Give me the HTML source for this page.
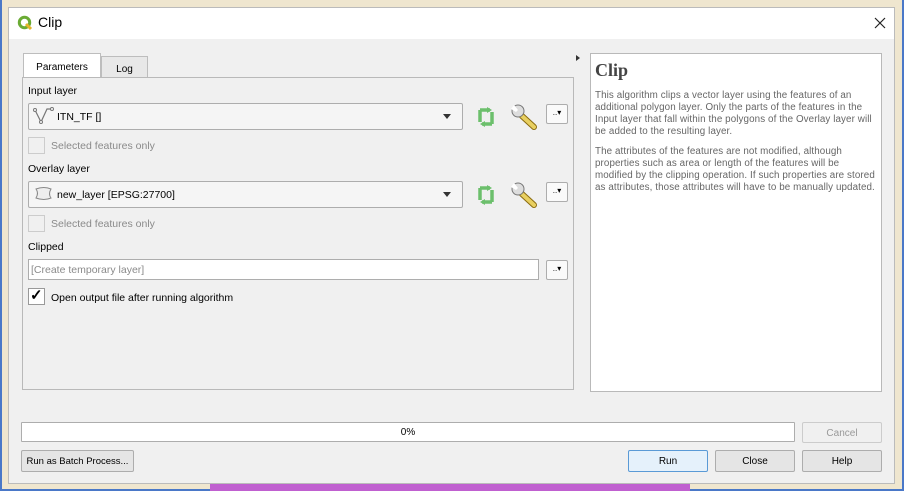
<!DOCTYPE html>
<html><head><style>
*{box-sizing:border-box;margin:0;padding:0}
body{width:904px;height:491px;overflow:hidden;background:#efe6cf;font-family:"Liberation Sans",sans-serif;font-size:10.5px;color:#000;position:relative}
.frame{position:absolute;left:0;top:0;width:904px;height:491px;border:2px solid #4a78c8;border-top:none}
.purple{position:absolute;left:210px;top:484px;width:480px;height:7px;background:#c060d0}
.dlg{position:absolute;left:8px;top:7px;width:887px;height:477px;background:#f0f0f0;border:1px solid #bbb}
.title{position:absolute;left:0;top:0;width:885px;height:31px;background:#fff}
.abs{position:absolute;white-space:nowrap}
.box{position:absolute;background:#fff;border:1px solid #adadad;border-radius:2px}
.btn{position:absolute;background:#e5e5e5;border:1px solid #adadad;border-radius:2px;text-align:center;font-size:10px;white-space:nowrap}
.gray{color:#8a8a8a}
.help{position:absolute;left:581px;top:45px;width:292px;height:339px;background:#fff;border:1px solid #b9b9b9;padding:5px 4px;color:#666;font-size:9.8px;letter-spacing:0.1px;line-height:12px}
.help h1{font-family:"Liberation Serif",serif;font-size:18px;line-height:22px;font-weight:bold;color:#444;margin-bottom:9px;letter-spacing:0}
.help p{margin-bottom:8px}
.cb{position:absolute;width:17px;height:17px;border:1px solid #ccc;background:#f0f0f0}
</style></head><body>
<div class="frame"></div>
<div class="purple"></div>
<div class="dlg">
 <div class="title">
  <svg class="abs" style="left:8px;top:7px" width="16" height="16" viewBox="0 0 16 16"><circle cx="7.5" cy="7.5" r="5.2" fill="none" stroke="#6aab34" stroke-width="3"/><path d="M9 9l5 5" stroke="#e4b52a" stroke-width="3"/></svg>
  <div class="abs" style="left:29px;top:6px;font-size:14px">Clip</div>
  <svg class="abs" style="left:865px;top:9px" width="12" height="12"><path d="M1 1l10 10M11 1L1 11" stroke="#222" stroke-width="1.2"/></svg>
 </div>
 <div class="abs" style="left:14px;top:45px;width:78px;height:24px;background:#fff;border:1px solid #bdbdbd;border-bottom:none;text-align:center;padding-top:8px;font-size:10px">Parameters</div>
 <div class="abs" style="left:92px;top:48px;width:47px;height:21px;background:#e8e8e8;border:1px solid #bdbdbd;border-bottom:none;text-align:center;padding-top:7px;font-size:10px">Log</div>
 <div class="abs" style="left:13px;top:69px;width:552px;height:313px;border:1px solid #b9b9b9;background:#f0f0f0"></div>
 <div class="abs" style="left:19px;top:77px">Input layer</div>
 <div class="box" style="left:19px;top:95px;width:435px;height:27px;background:#f5f5f5"></div>
 <svg class="abs" style="left:24px;top:99px" width="22" height="18"><path d="M2 3l6 12 6-13h5" fill="none" stroke="#777" stroke-width="1.2"/><circle cx="2" cy="3" r="1.5" fill="#fff" stroke="#777"/><circle cx="8" cy="15" r="1.5" fill="#fff" stroke="#777"/><circle cx="19" cy="2" r="1.5" fill="#fff" stroke="#777"/></svg>
 <div class="abs" style="left:48px;top:103px">ITN_TF []</div>
 <div class="abs" style="left:434px;top:106px;border:4px solid transparent;border-top:5px solid #333;"></div>
 <div class="cb" style="left:19px;top:129px"></div>
 <div class="abs gray" style="left:42px;top:132px">Selected features only</div>
 <div class="abs" style="left:19px;top:155px">Overlay layer</div>
 <div class="box" style="left:19px;top:173px;width:435px;height:27px;background:#f5f5f5"></div>
 <svg class="abs" style="left:24px;top:177px" width="22" height="18"><path d="M3 4q8-3 15 0q-3 5 0 9q-7 3-15 0q3-5 0-9z" fill="#eee" stroke="#888"/></svg>
 <div class="abs" style="left:48px;top:181px">new_layer [EPSG:27700]</div>
 <div class="abs" style="left:434px;top:184px;border:4px solid transparent;border-top:5px solid #333;"></div>
 <div class="cb" style="left:19px;top:207px"></div>
 <div class="abs gray" style="left:42px;top:210px">Selected features only</div>
 <div class="abs" style="left:19px;top:233px">Clipped</div>
 <div class="box" style="left:19px;top:251px;width:511px;height:21px;border-radius:0"></div>
 <div class="abs gray" style="left:22px;top:256px">[Create temporary layer]</div>
 <div class="cb" style="left:19px;top:280px;background:#fff;border-color:#999"></div>
 <div class="abs" style="left:21px;top:278px;font-size:15px;font-weight:bold">✓</div>
 <div class="abs" style="left:42px;top:284px">Open output file after running algorithm</div>
 <svg class="abs" style="left:464px;top:98px" width="26" height="22" viewBox="0 0 26 22"><path d="M7 4h10M19 18H9M7 4v12M19 18V6" fill="none" stroke="#6cbf6c" stroke-width="3.5"/><path d="M14 1l5 3-5 3zM12 15l-5 3 5 3z" fill="#6cbf6c"/></svg>
 <svg class="abs" style="left:501px;top:95px" width="28" height="28" viewBox="0 0 28 28"><path d="M12 13l12 11" stroke="#8a6b10" stroke-width="6" stroke-linecap="round"/><path d="M12 13l12 11" stroke="#e8cf60" stroke-width="4" stroke-linecap="round"/><circle cx="8" cy="8" r="6" fill="#ddd" stroke="#777"/><path d="M4 2l4 5-2 2-5-3" fill="#fff"/></svg>
 <div class="btn" style="left:537px;top:96px;width:22px;height:20px;background:#fafafa;font-size:8px;padding-top:3px">..▾</div>
 <svg class="abs" style="left:464px;top:176px" width="26" height="22" viewBox="0 0 26 22"><path d="M7 4h10M19 18H9M7 4v12M19 18V6" fill="none" stroke="#6cbf6c" stroke-width="3.5"/><path d="M14 1l5 3-5 3zM12 15l-5 3 5 3z" fill="#6cbf6c"/></svg>
 <svg class="abs" style="left:501px;top:173px" width="28" height="28" viewBox="0 0 28 28"><path d="M12 13l12 11" stroke="#8a6b10" stroke-width="6" stroke-linecap="round"/><path d="M12 13l12 11" stroke="#e8cf60" stroke-width="4" stroke-linecap="round"/><circle cx="8" cy="8" r="6" fill="#ddd" stroke="#777"/><path d="M4 2l4 5-2 2-5-3" fill="#fff"/></svg>
 <div class="btn" style="left:537px;top:174px;width:22px;height:20px;background:#fafafa;font-size:8px;padding-top:3px">..▾</div>
 <div class="btn" style="left:537px;top:252px;width:22px;height:20px;background:#fafafa;font-size:8px;padding-top:3px">..▾</div>
 <div class="abs" style="left:567px;top:47px;border:3px solid transparent;border-left:4px solid #333"></div>
 <div class="help">
  <h1>Clip</h1>
  <p>This algorithm clips a vector layer using the features of an additional polygon layer. Only the parts of the features in the Input layer that fall within the polygons of the Overlay layer will be added to the resulting layer.</p>
  <p>The attributes of the features are not modified, although properties such as area or length of the features will be modified by the clipping operation. If such properties are stored as attributes, those attributes will have to be manually updated.</p>
 </div>
 <div class="box" style="left:12px;top:414px;width:774px;height:20px;border-radius:1px;text-align:center;padding-top:4px;font-size:10px">0%</div>
 <div class="btn" style="left:793px;top:414px;width:80px;height:21px;color:#999;padding-top:5px;background:#f0f0f0;border-color:#ccc">Cancel</div>
 <div class="btn" style="left:12px;top:442px;width:113px;height:22px;padding-top:5px;font-size:9.5px">Run as Batch Process...</div>
 <div class="btn" style="left:619px;top:442px;width:80px;height:22px;padding-top:5px;border-color:#5a9ad6;background:#e5f1fb">Run</div>
 <div class="btn" style="left:706px;top:442px;width:80px;height:22px;padding-top:5px">Close</div>
 <div class="btn" style="left:793px;top:442px;width:80px;height:22px;padding-top:5px">Help</div>
</div>
</body></html>
